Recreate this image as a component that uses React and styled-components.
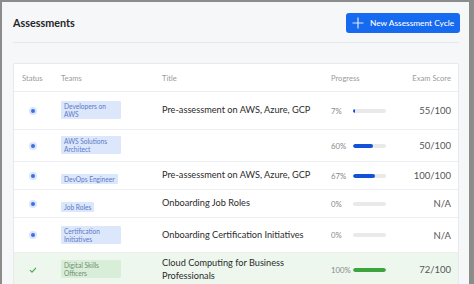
import React from "react";
import styled, { createGlobalStyle } from "styled-components";

const Global = createGlobalStyle`
  html, body { margin: 0; padding: 0; background: #8c8c8c; }
  body { font-family: Lato, "Open Sans", sans-serif; width: 474px; height: 284px; overflow: hidden; }
  * { box-sizing: border-box; }
`;

const Frame = styled.div`
  margin: 2px 5px 0 2px;
  height: 282px;
  background: #f5f7f9;
  padding: 0 10px 0 11px;
  overflow: hidden;
`;

const Header = styled.div`
  display: flex;
  align-items: center;
  justify-content: space-between;
  height: 41px;
  padding-top: 1px;
  border-bottom: 1px solid #e6e9ec;
`;

const Heading = styled.h1`
  margin: 0;
  font-size: 10.8px;
  font-weight: 700;
  color: #262626;
`;

const PrimaryButton = styled.button`
  display: flex;
  align-items: center;
  gap: 6px;
  width: 114px;
  height: 20px;
  margin-right: -1px;
  padding: 0 0 0 6px;
  border: none;
  border-radius: 3px;
  background: #166af0;
  color: #fff;
  font-family: Lato, sans-serif;
  font-size: 8.3px;
  font-weight: 500;
  white-space: nowrap;
`;

const Card = styled.div`
  margin-top: 20px;
  background: #fff;
  border: 1px solid #e7e9ec;
  border-bottom: none;
  border-radius: 2px;
`;

const Grid = "39px 101px 169px 60px 1fr";

const HeadRow = styled.div`
  display: grid;
  grid-template-columns: ${Grid};
  align-items: center;
  height: 28px;
  padding: 0 7px 0 8px;
  border-bottom: 1px solid #eceef1;
  font-size: 7.6px;
  color: #9b9b9b;
`;

const HeadCell = styled.div`
  text-align: ${(p) => (p.$right ? "right" : "left")};
`;

const Row = styled.div`
  display: grid;
  grid-template-columns: ${Grid};
  align-items: center;
  height: ${(p) => p.$h}px;
  padding: 0 7px 0 8px;
  border-bottom: 1px solid #eceef1;
  background: ${(p) => (p.$done ? "#eef7ee" : "#fff")};
`;

const StatusCell = styled.div`
  display: flex;
  padding-left: 7px;
`;

const Dot = styled.span`
  width: 8px;
  height: 8px;
  border-radius: 50%;
  background: #dbe6fb;
  display: flex;
  align-items: center;
  justify-content: center;
  &::after {
    content: "";
    width: 4px;
    height: 4px;
    border-radius: 50%;
    background: #3c6fe0;
  }
`;

const Check = styled.svg`
  width: 8px;
  height: 8px;
`;

const Chip = styled.span`
  display: inline-block;
  max-width: 60px;
  padding: 1px 3px;
  font-size: 6.6px;
  line-height: 8px;
  border-radius: 1px;
  background: ${(p) => (p.$done ? "#d8eed8" : "#dce7fc")};
  color: ${(p) => (p.$done ? "#6f8f6f" : "#5a79c7")};
`;

const Title = styled.div`
  font-size: 9.2px;
  line-height: 12.5px;
  color: #2b2b2b;
  padding-right: 5px;
`;

const ProgressCell = styled.div`
  display: flex;
  align-items: center;
`;

const Pct = styled.span`
  width: 22px;
  font-size: 7.8px;
  color: #8a8a8a;
`;

const Track = styled.div`
  width: 33px;
  height: 4px;
  border-radius: 2px;
  background: #e9e9ea;
  overflow: hidden;
`;

const Fill = styled.div`
  height: 100%;
  border-radius: 2px;
  background: ${(p) => (p.$done ? "#3ea43e" : "#1352d8")};
`;

const Score = styled.div`
  text-align: right;
  font-size: 9.5px;
  color: #555;
`;

const rows = [
  { team: "Developers on AWS", title: "Pre-assessment on AWS, Azure, GCP", pct: 7, score: "55/100", h: 38 },
  { team: "AWS Solutions Architect", title: "", pct: 60, score: "50/100", h: 32 },
  { team: "DevOps Engineer", title: "Pre-assessment on AWS, Azure, GCP", pct: 67, score: "100/100", h: 28 },
  { team: "Job Roles", title: "Onboarding Job Roles", pct: 0, score: "N/A", h: 28 },
  { team: "Certification Initiatives", title: "Onboarding Certification Initiatives", pct: 0, score: "N/A", h: 35 },
  { team: "Digital Skills Officers", title: "Cloud Computing for Business Professionals", pct: 100, score: "72/100", h: 34, done: true },
];

export default function App() {
  return (
    <>
      <Global />
      <Frame>
        <Header>
          <Heading>Assessments</Heading>
          <PrimaryButton>
            <svg width="12" height="12" viewBox="0 0 12 12">
              <path d="M6 0.5v11M0.5 6h11" stroke="#fff" strokeWidth="1.2" opacity="0.85" />
            </svg>
            New Assessment Cycle
          </PrimaryButton>
        </Header>
        <Card>
          <HeadRow>
            <HeadCell>Status</HeadCell>
            <HeadCell>Teams</HeadCell>
            <HeadCell>Title</HeadCell>
            <HeadCell>Progress</HeadCell>
            <HeadCell $right>Exam Score</HeadCell>
          </HeadRow>
          {rows.map((r, i) => (
            <Row key={i} $h={r.h} $done={r.done}>
              <StatusCell>
                {r.done ? (
                  <Check viewBox="0 0 8 8">
                    <path d="M1 4.2l2 2L7 1.8" fill="none" stroke="#4ca64c" strokeWidth="1.1" />
                  </Check>
                ) : (
                  <Dot />
                )}
              </StatusCell>
              <div>
                <Chip $done={r.done}>{r.team}</Chip>
              </div>
              <Title>{r.title}</Title>
              <ProgressCell>
                <Pct>{r.pct}%</Pct>
                <Track>
                  <Fill $done={r.done} style={{ width: `${Math.max(r.pct, r.pct ? 6 : 0)}%` }} />
                </Track>
              </ProgressCell>
              <Score>{r.score}</Score>
            </Row>
          ))}
        </Card>
      </Frame>
    </>
  );
}
